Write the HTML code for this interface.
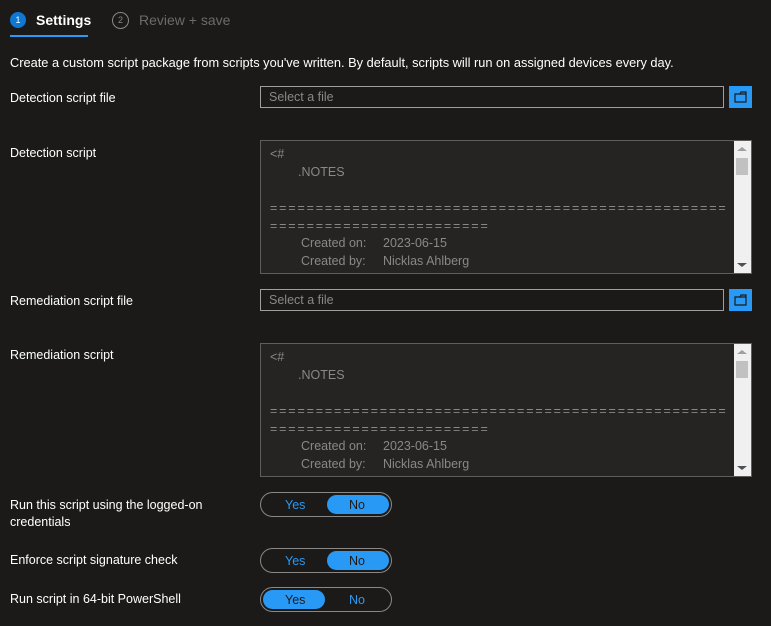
<!DOCTYPE html>
<html><head><style>
*{box-sizing:border-box;margin:0;padding:0}
body{width:771px;height:626px;background:#1b1a19;color:#fff;font-family:"Liberation Sans",sans-serif;font-size:12.5px;position:relative;overflow:hidden}
.a{position:absolute;white-space:nowrap}
.inp{position:absolute;left:260px;width:464px;height:22px;border:1px solid #a19f9d;background:#1b1a19;color:#8a8886;padding:3px 8px;font-size:12.5px}
.btn{position:absolute;left:729px;width:23px;height:22px;background:#2899f5}
.ta{position:absolute;left:260px;width:492px;height:134px;border:1px solid #605e5c;background:#252423;color:#8a8886;font-size:12.5px}
.ta .sb{position:absolute;right:0;top:0;width:17px;height:132px;background:#f0f0f0}
.ta .th{position:absolute;right:3px;top:17px;width:12px;height:17px;background:#c1c1c1}
.ta .up{position:absolute;right:4px;top:6px;width:0;height:0;border-left:5px solid transparent;border-right:5px solid transparent;border-bottom:4px solid #a0a0a0}
.ta .dn{position:absolute;right:4px;bottom:6px;width:0;height:0;border-left:5px solid transparent;border-right:5px solid transparent;border-top:4px solid #505050}
.ta div.l{position:absolute;white-space:nowrap}
.ta div.eq{letter-spacing:1.85px}
.tg{position:absolute;left:260px;width:132px;height:25px;border:1px solid #8a8886;border-radius:13px}
.tg .k{position:absolute;top:2px;width:62px;height:19px;background:#2899f5;border-radius:10px}
.tg span{position:absolute;top:5px;font-size:12.5px;color:#2899f5}
</style></head><body>
<div class="a" style="left:10px;top:12px;width:16px;height:16px;border-radius:50%;background:#0f78d4;color:#fff;font-size:9px;text-align:center;line-height:16px">1</div>
<div class="a" style="left:36px;top:12px;font-weight:bold;font-size:14px">Settings</div>
<div class="a" style="left:10px;top:35px;width:78px;height:2px;background:#2899f5"></div>
<div class="a" style="left:112px;top:12px;width:17px;height:17px;border-radius:50%;border:1px solid #8a8886;color:#8a8886;font-size:9px;text-align:center;line-height:15px">2</div>
<div class="a" style="left:139px;top:12px;font-size:14px;color:#6d6b69">Review + save</div>
<div class="a" style="left:10px;top:55px;font-size:12.8px">Create a custom script package from scripts you've written. By default, scripts will run on assigned devices every day.</div>

<div class="a" style="left:10px;top:91px">Detection script file</div>
<div class="inp" style="top:86px">Select a file</div>
<div class="btn" style="top:86px"><svg width="23" height="22"><path d="M6 8h11v8H6z M11 8l1-2h5v2" fill="none" stroke="#1b1a19" stroke-width="1.2"/></svg></div>
<div class="a" style="left:10px;top:146px">Detection script</div>
<div class="ta" style="top:140px">
<div class="l" style="left:9px;top:6px">&lt;#</div>
<div class="l" style="left:37px;top:24px">.NOTES</div>
<div class="l eq" style="left:9px;top:60px">==================================================</div>
<div class="l eq" style="left:9px;top:78px">========================</div>
<div class="l" style="left:40px;top:95px">Created on:</div><div class="l" style="left:122px;top:95px">2023-06-15</div>
<div class="l" style="left:40px;top:113px">Created by:</div><div class="l" style="left:122px;top:113px">Nicklas Ahlberg</div>
<div class="sb"></div><div class="up"></div><div class="th"></div><div class="dn"></div></div>

<div class="a" style="left:10px;top:294px">Remediation script file</div>
<div class="inp" style="top:289px">Select a file</div>
<div class="btn" style="top:289px"><svg width="23" height="22"><path d="M6 8h11v8H6z M11 8l1-2h5v2" fill="none" stroke="#1b1a19" stroke-width="1.2"/></svg></div>
<div class="a" style="left:10px;top:348px">Remediation script</div>
<div class="ta" style="top:343px">
<div class="l" style="left:9px;top:6px">&lt;#</div>
<div class="l" style="left:37px;top:24px">.NOTES</div>
<div class="l eq" style="left:9px;top:60px">==================================================</div>
<div class="l eq" style="left:9px;top:78px">========================</div>
<div class="l" style="left:40px;top:95px">Created on:</div><div class="l" style="left:122px;top:95px">2023-06-15</div>
<div class="l" style="left:40px;top:113px">Created by:</div><div class="l" style="left:122px;top:113px">Nicklas Ahlberg</div>
<div class="sb"></div><div class="up"></div><div class="th"></div><div class="dn"></div></div>

<div class="a" style="left:10px;top:497px;line-height:17px">Run this script using the logged-on<br>credentials</div>
<div class="tg" style="top:492px"><div class="k" style="left:66px"></div><span style="left:24px">Yes</span><span style="left:88px;color:#1b1a19">No</span></div>
<div class="a" style="left:10px;top:553px">Enforce script signature check</div>
<div class="tg" style="top:548px"><div class="k" style="left:66px"></div><span style="left:24px">Yes</span><span style="left:88px;color:#1b1a19">No</span></div>
<div class="a" style="left:10px;top:592px">Run script in 64-bit PowerShell</div>
<div class="tg" style="top:587px"><div class="k" style="left:2px"></div><span style="left:24px;color:#1b1a19">Yes</span><span style="left:88px">No</span></div>
</body></html>
